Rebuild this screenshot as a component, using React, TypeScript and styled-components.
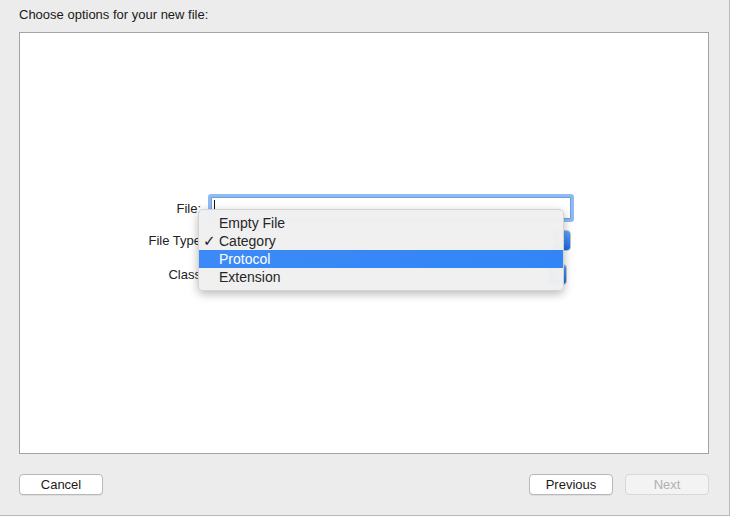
import { FC } from 'react';
import styled, { createGlobalStyle } from 'styled-components';

const GlobalStyle = createGlobalStyle`
    html, body {
        margin: 0;
        padding: 0;
        background: #ececec;
    }
    body {
        font-family: "Liberation Sans", Arial, sans-serif;
        font-size: 13px;
        color: #1a1a1a;
    }
`

const fileTypes = ['Empty File', 'Category', 'Protocol', 'Extension'];

const App: FC = () => {
    return (
        <>
            <GlobalStyle />
            <SWindow>
                <STitle>Choose options for your new file:</STitle>
                <SPanel>
                    <SForm>
                        <SRow>
                            <SLabel>File:</SLabel>
                            <SFieldRing>
                                <SField>
                                    <SCaret />
                                </SField>
                            </SFieldRing>
                        </SRow>
                        <SRow $top={8}>
                            <SLabel>File Type</SLabel>
                            <SPopUp $width={362}>
                                <SPopUpCap>
                                    <svg width="7" height="12" viewBox="0 0 7 12">
                                        <path d="M1 4.5 L3.5 2 L6 4.5 M1 7.5 L3.5 10 L6 7.5" fill="none" stroke="#fff" strokeWidth="1.3" />
                                    </svg>
                                </SPopUpCap>
                            </SPopUp>
                        </SRow>
                        <SRow $top={13}>
                            <SLabel>Class</SLabel>
                            <SPopUp $width={358}>
                                <SPopUpCap>
                                    <svg width="7" height="12" viewBox="0 0 7 12">
                                        <path d="M1 4.5 L3.5 2 L6 4.5 M1 7.5 L3.5 10 L6 7.5" fill="none" stroke="#fff" strokeWidth="1.3" />
                                    </svg>
                                </SPopUpCap>
                            </SPopUp>
                        </SRow>
                        <SMenu>
                            {fileTypes.map((t) => (
                                <SItem key={t} $selected={t === 'Protocol'}>
                                    <SCheck>{t === 'Category' ? '✓' : ''}</SCheck>
                                    {t}
                                </SItem>
                            ))}
                        </SMenu>
                    </SForm>
                </SPanel>
                <SFooter>
                    <SButton>Cancel</SButton>
                    <SRight>
                        <SButton>Previous</SButton>
                        <SButton $disabled>Next</SButton>
                    </SRight>
                </SFooter>
            </SWindow>
        </>
    )
}

export default App;

const SWindow = styled.div`
    width: 730px;
    height: 516px;
    box-sizing: border-box;
    padding: 7px 20px 0 19px;
    border-right: 1px solid #b9b9b9;
    border-bottom: 1px solid #b9b9b9;
    background: #ececec;
`
const STitle = styled.div`
    height: 16px;
    line-height: 16px;
    margin-bottom: 9px;
`
const SPanel = styled.div`
    height: 422px;
    box-sizing: border-box;
    background: #fff;
    border: 1px solid #a3a3a3;
    padding: 161px 0 0 111px;
`
const SForm = styled.div`
    position: relative;
    width: 444px;
`
const SRow = styled.div<{ $top?: number }>`
    display: flex;
    align-items: center;
    margin-top: ${(p) => p.$top ?? 0}px;
`
const SLabel = styled.div`
    width: 70px;
    margin-right: 7px;
    text-align: right;
    color: #222;
    white-space: nowrap;
`
const SFieldRing = styled.div`
    padding: 3px;
    border-radius: 3px;
    background: #8fbaf3;
`
const SField = styled.div`
    width: 360px;
    height: 22px;
    box-sizing: border-box;
    background: #fff;
    border: 1px solid #6e9fe0;
    display: flex;
    align-items: flex-start;
    padding: 2px 0 0 2px;
`
const SCaret = styled.div`
    width: 1px;
    height: 13px;
    background: #111;
`
const SPopUp = styled.div<{ $width: number }>`
    width: ${(p) => p.$width}px;
    height: 21px;
    margin-left: 1px;
    box-sizing: border-box;
    background: #fff;
    border: 1px solid #c3c3c3;
    border-radius: 4px;
    display: flex;
    justify-content: flex-end;
    overflow: hidden;
`
const SPopUpCap = styled.div`
    width: 17px;
    background: linear-gradient(#5aa2f8, #1d6ae6);
    display: flex;
    align-items: center;
    justify-content: center;
`
const SMenu = styled.div`
    position: absolute;
    left: 67px;
    top: 15px;
    width: 366px;
    box-sizing: border-box;
    padding: 4px 0 4px;
    background: rgba(240, 240, 240, 0.98);
    border: 1px solid rgba(0, 0, 0, 0.12);
    border-radius: 5px;
    box-shadow: 0 3px 10px rgba(0, 0, 0, 0.28);
`
const SItem = styled.div<{ $selected?: boolean }>`
    display: flex;
    align-items: center;
    height: 18px;
    padding-left: 4px;
    font-size: 14px;
    color: ${(p) => (p.$selected ? '#fff' : '#262626')};
    background: ${(p) => (p.$selected ? 'linear-gradient(90deg, #3b8af7, #3385f5)' : 'transparent')};
`
const SCheck = styled.span`
    width: 16px;
    font-family: "DejaVu Sans", sans-serif;
    font-size: 15px;
    color: #222;
`
const SFooter = styled.div`
    display: flex;
    justify-content: space-between;
    margin-top: 20px;
`
const SRight = styled.div`
    display: flex;
    gap: 12px;
`
const SButton = styled.div<{ $disabled?: boolean }>`
    width: 84px;
    height: 21px;
    box-sizing: border-box;
    display: flex;
    align-items: center;
    justify-content: center;
    background: ${(p) => (p.$disabled ? '#f3f3f3' : '#fff')};
    border: 1px solid ${(p) => (p.$disabled ? '#d8d8d8' : '#b8b8b8')};
    border-radius: 4px;
    box-shadow: ${(p) => (p.$disabled ? 'none' : '0 1px 0 rgba(0,0,0,0.06)')};
    color: ${(p) => (p.$disabled ? '#b0b0b0' : '#1a1a1a')};
    font-size: 13px;
`
